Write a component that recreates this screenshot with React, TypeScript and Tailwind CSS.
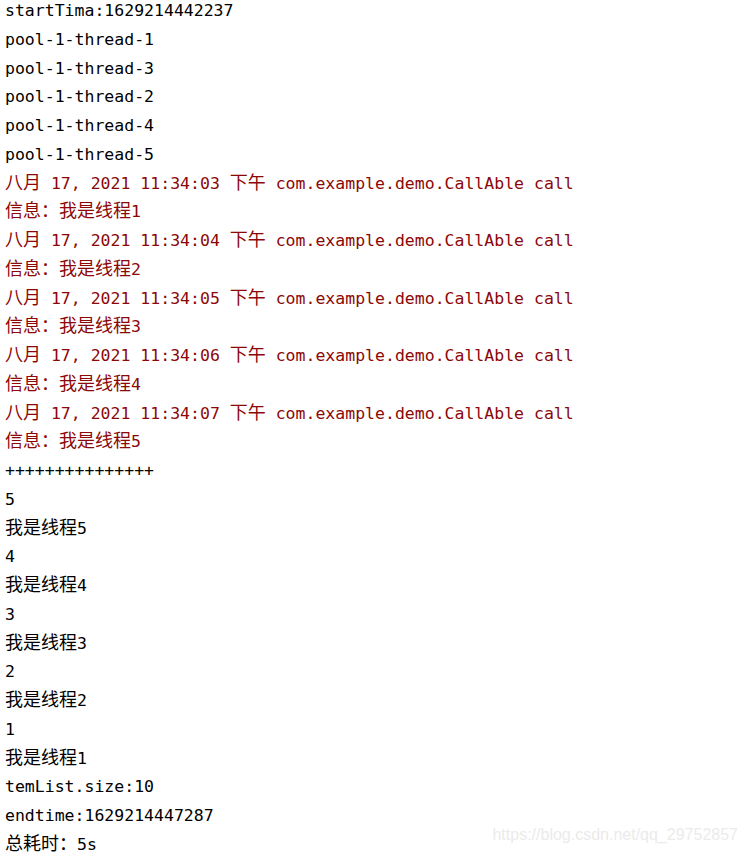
import React from "react";

type Line = { text: string; red?: boolean };

const lines: Line[] = [
  { text: "startTima:1629214442237" },
  { text: "pool-1-thread-1" },
  { text: "pool-1-thread-3" },
  { text: "pool-1-thread-2" },
  { text: "pool-1-thread-4" },
  { text: "pool-1-thread-5" },
  { text: "八月 17, 2021 11:34:03 下午 com.example.demo.CallAble call", red: true },
  { text: "信息：我是线程1", red: true },
  { text: "八月 17, 2021 11:34:04 下午 com.example.demo.CallAble call", red: true },
  { text: "信息：我是线程2", red: true },
  { text: "八月 17, 2021 11:34:05 下午 com.example.demo.CallAble call", red: true },
  { text: "信息：我是线程3", red: true },
  { text: "八月 17, 2021 11:34:06 下午 com.example.demo.CallAble call", red: true },
  { text: "信息：我是线程4", red: true },
  { text: "八月 17, 2021 11:34:07 下午 com.example.demo.CallAble call", red: true },
  { text: "信息：我是线程5", red: true },
  { text: "+++++++++++++++" },
  { text: "5" },
  { text: "我是线程5" },
  { text: "4" },
  { text: "我是线程4" },
  { text: "3" },
  { text: "我是线程3" },
  { text: "2" },
  { text: "我是线程2" },
  { text: "1" },
  { text: "我是线程1" },
  { text: "temList.size:10" },
  { text: "endtime:1629214447287" },
  { text: "总耗时：5s" },
];

// split text into ascii / cjk runs so CJK glyphs get their own size
const renderText = (text: string) => {
  const parts = text.match(/[\u3000-\u9fff\uff00-\uffef]+|[^\u3000-\u9fff\uff00-\uffef]+/g) || [];
  return parts.map((p, i) =>
    /[\u3000-\u9fff\uff00-\uffef]/.test(p) ? (
      <span
        key={i}
        className="text-[18px] leading-none font-['Noto_Sans_CJK_SC',sans-serif]"
      >
        {p}
      </span>
    ) : (
      <span key={i}>{p}</span>
    )
  );
};

export default function App() {
  return (
    <div className="relative w-[747px] h-[856px] overflow-hidden bg-white">
      <div className="mt-[-3px] pl-[5px] font-['DejaVu_Sans_Mono',monospace] text-[16.5px] leading-[28.75px] whitespace-pre">
        {lines.map((l, i) => (
          <div
            key={i}
            className={`h-[28.75px] ${l.red ? "text-[#8c0707]" : "text-black"}`}
          >
            {renderText(l.text)}
          </div>
        ))}
      </div>
      <div className="absolute right-[9px] bottom-[9px] font-['Liberation_Sans',sans-serif] text-[16px] text-[#ebebeb]">
        https://blog.csdn.net/qq_29752857
      </div>
    </div>
  );
}
